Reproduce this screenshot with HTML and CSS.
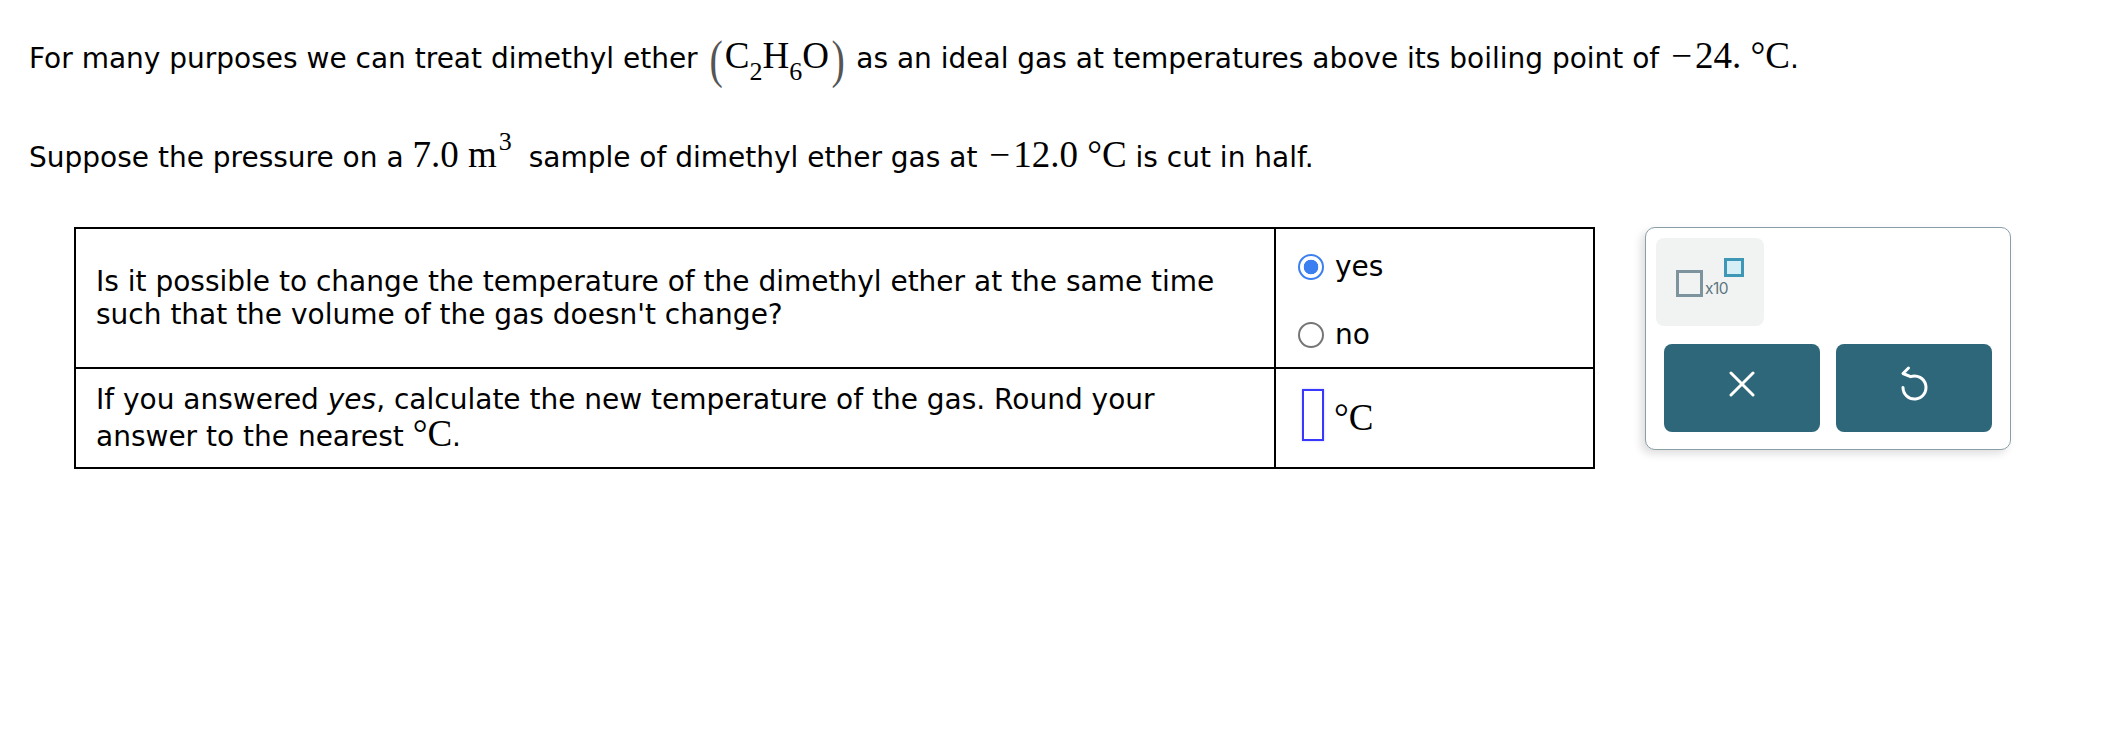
FILE: index.html
```html
<!DOCTYPE html>
<html lang="en">
<head>
<meta charset="utf-8">
<title>Dimethyl ether</title>
<link rel="stylesheet" href="styles.css">
</head>
<body>
<div class="page">
  <p class="q q1">For many purposes we can treat dimethyl ether <span class="m"><span class="paren">(</span>C<sub>2</sub>H<sub>6</sub>O<span class="paren">)</span></span> as an ideal gas at temperatures above its boiling point of <span class="m"><span class="neg">−</span>24.&nbsp;°C</span>.</p>
  <p class="q q2">Suppose the pressure on a <span class="m">7.0&nbsp;m<sup>3</sup></span> sample of dimethyl ether gas at <span class="m"><span class="neg">−</span>12.0&nbsp;°C</span> is cut in half.</p>

  <div class="work">
    <table class="qt">
      <colgroup><col class="c1"><col class="c2"></colgroup>
      <tr class="r1">
        <td class="prompt">Is it possible to change the temperature of the dimethyl ether at the same time<br>such that the volume of the gas doesn't change?</td>
        <td class="ans">
          <div class="opts">
            <label class="opt"><span class="radio on"></span>yes</label>
            <label class="opt"><span class="radio"></span>no</label>
          </div>
        </td>
      </tr>
      <tr class="r2">
        <td class="prompt">If you answered <i>yes</i>, calculate the new temperature of the gas. Round your<br>answer to the nearest <span class="m">°C</span>.</td>
        <td class="ans ans2">
          <div class="unitrow"><span class="box"></span><span class="m">°C</span></div>
        </td>
      </tr>
    </table>

    <div class="tools">
      <button class="x10" type="button">
        <svg width="108" height="88" viewBox="0 0 108 88">
          <rect x="21.5" y="33.5" width="24" height="24" fill="none" stroke="#7d939d" stroke-width="3"/>
          <rect x="69.5" y="21.5" width="17" height="16" fill="#d6eef5" stroke="#3d97b5" stroke-width="3"/>
          <text x="49" y="56" class="x10t">x10</text>
        </svg>
      </button>
      <div class="actions">
        <button class="act" type="button">
          <svg width="26" height="26" viewBox="0 0 26 26">
            <path d="M2 2 L24 24 M24 2 L2 24" stroke="#fff" stroke-width="3" stroke-linecap="round" fill="none"/>
          </svg>
        </button>
        <button class="act" type="button">
          <svg width="32" height="40" viewBox="0 0 32 40">
            <path d="M10.5 4 L5 9.5 L12.6 12.7 A11.5 11.5 0 1 1 5 23.5" stroke="#fff" stroke-width="3" stroke-linecap="round" stroke-linejoin="round" fill="none"/>
          </svg>
        </button>
      </div>
    </div>
  </div>
</div>
</body>
</html>
```

FILE: styles.css
```css
html, body {
  margin: 0;
  padding: 0;
  background: #fff;
}

body {
  font-family: "DejaVu Sans", Verdana, sans-serif;
  font-size: 28px;
  color: #000;
}

.q {
  margin: 0;
  padding-left: 29px;
  line-height: 33px;
  white-space: nowrap;
}

.q1 { padding-top: 42px; }
.q2 { margin-top: 66px; }

.m {
  font-family: "Liberation Serif", "Times New Roman", serif;
  font-size: 37px;
  line-height: 0;
}

.neg {
  margin-left: 3px;
  margin-right: 3px;
}

.m sub {
  font-size: 26px;
  vertical-align: -12px;
  line-height: 0;
}

.m sup {
  font-size: 26px;
  vertical-align: 17px;
  line-height: 0;
  margin-left: 2px;
  margin-right: 8px;
}

.paren {
  display: inline-block;
  line-height: 26px;
  transform-origin: 50% 0;
  transform: translateY(-2px) scale(1.08, 1.45);
  color: #555;
  margin: 0 3px;
}

.work {
  display: flex;
  align-items: flex-start;
  gap: 50px;
  margin-top: 53px;
  padding-left: 74px;
}

.qt {
  border-collapse: collapse;
  table-layout: fixed;
  width: 1519px;
}

.qt col.c1 { width: 1200px; }
.qt col.c2 { width: 319px; }

.qt td {
  border: 2px solid #000;
  padding: 0;
}

.r1 td { height: 138px; }
.r2 td { height: 98px; }

.prompt {
  padding: 0 17px 0 20px !important;
  vertical-align: middle;
  line-height: 33px;
  white-space: nowrap;
}

.r2 .prompt { line-height: 37px; }

.ans {
  vertical-align: top;
  padding-left: 22px !important;
}

.opts {
  display: flex;
  flex-direction: column;
  gap: 35px;
  padding-top: 21px;
}

.opt {
  display: flex;
  align-items: center;
  gap: 11px;
  line-height: 33px;
}

.radio {
  width: 26px;
  height: 26px;
  box-sizing: border-box;
  border-radius: 50%;
  border: 2px solid #767676;
  background: #fff;
}

.radio.on {
  border-color: #3b7ff0;
  background: radial-gradient(circle, #3b7ff0 0 7px, #fff 7.6px);
}

.ans2 {
  vertical-align: middle;
  padding-left: 26px !important;
}

.unitrow {
  display: flex;
  align-items: center;
  gap: 10px;
  line-height: 40px;
}

.unitrow .m { line-height: 40px; }

.box {
  width: 22px;
  height: 52px;
  box-sizing: border-box;
  border: 2px solid #3838ff;
  box-shadow: 0 0 2px rgba(80, 80, 255, .35);
  margin-top: -6px;
}

.tools {
  width: 366px;
  height: 223px;
  box-sizing: border-box;
  border: 1.5px solid #8a9ea8;
  border-radius: 10px;
  background: #fff;
  box-shadow: -4px 4px 8px rgba(0, 0, 0, .13);
  padding: 9.5px 0 0 9.5px;
}

.tools button {
  border: none;
  padding: 0;
  margin: 0;
  cursor: pointer;
  display: flex;
}

.x10 {
  width: 108px;
  height: 88px;
  background: #f1f3f3;
  border-radius: 8px;
}

.x10t {
  font-family: Inter, "Open Sans", sans-serif;
  font-size: 15.5px;
  fill: #5d7580;
  letter-spacing: -0.5px;
}

.actions {
  display: flex;
  gap: 16px;
  margin: 18px 0 0 8px;
}

.act {
  width: 156px;
  height: 88px;
  border-radius: 8px;
  background: #2e6779;
  align-items: center;
  justify-content: center;
  padding-bottom: 8px !important;
  box-sizing: border-box;
}
```
